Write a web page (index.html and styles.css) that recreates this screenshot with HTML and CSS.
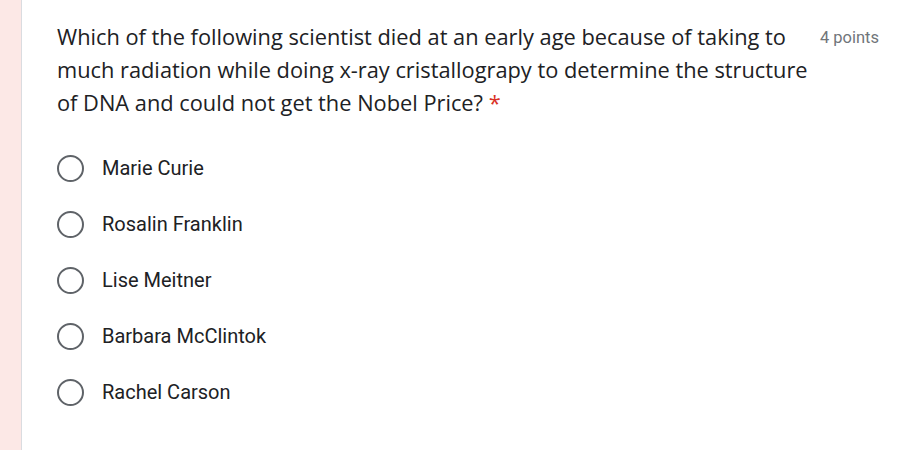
FILE: index.html
```html
<!DOCTYPE html>
<html lang="en">
<head>
    <meta charset="UTF-8">
    <title>Question</title>
    <link rel="stylesheet" href="styles.css">
</head>
<body>
<div class="page">
    <div class="strip"></div>
    <div class="card">
        <div class="header">
            <div class="title">Which of the following scientist died at an early age because of taking to much radiation while doing x-ray cristallograpy to determine the structure of DNA and could not get the Nobel Price? <span class="req">*</span></div>
            <div class="points">4 points</div>
        </div>
        <div class="options">
            <label class="option"><span class="radio"></span>Marie Curie</label>
            <label class="option"><span class="radio"></span>Rosalin Franklin</label>
            <label class="option"><span class="radio"></span>Lise Meitner</label>
            <label class="option"><span class="radio"></span>Barbara McClintok</label>
            <label class="option"><span class="radio"></span>Rachel Carson</label>
        </div>
    </div>
</div>
</body>
</html>
```
FILE: styles.css
```css
body {
    margin: 0;
    background: #fff;
}

.page {
    display: flex;
    height: 450px;
}

.strip {
    width: 21px;
    background: #fce8e6;
    border-right: 1px solid #dadce0;
}

.card {
    flex: 1;
    padding: 20px 30px 0 35px;
}

.header {
    display: flex;
    align-items: flex-start;
}

.title {
    width: 760px;
    font-family: "Open Sans", sans-serif;
    font-size: 21.8px;
    line-height: 33px;
    color: #202124;
}

.req {
    color: #d93025;
}

.points {
    margin-left: auto;
    font-family: Roboto, sans-serif;
    font-size: 16.5px;
    line-height: 35px;
    color: #70757a;
    white-space: nowrap;
}

.options {
    margin-top: 21px;
}

.option {
    display: flex;
    align-items: center;
    height: 56px;
    font-family: Roboto, sans-serif;
    font-size: 20px;
    color: #202124;
}

.radio {
    width: 23px;
    height: 23px;
    border: 2px solid #5f6368;
    border-radius: 50%;
    margin-right: 18px;
}
```
